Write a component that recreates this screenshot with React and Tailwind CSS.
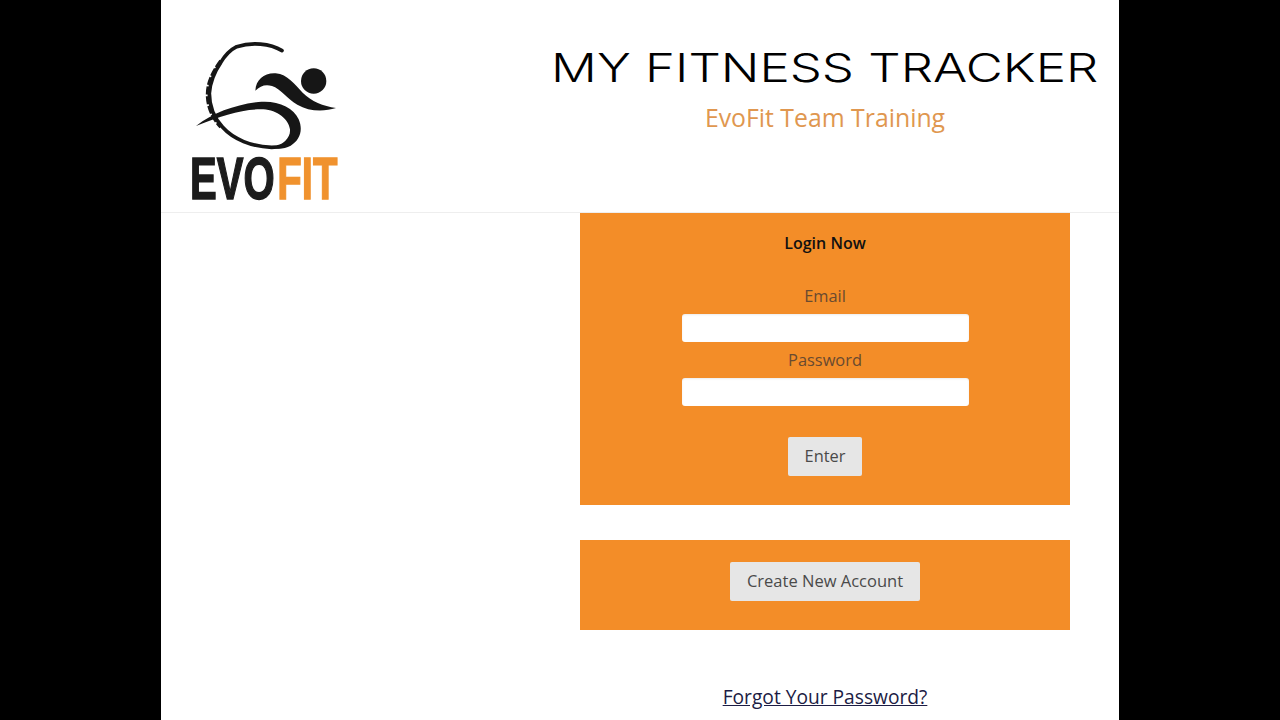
import React from 'react'

const Logo = () => (
  <div className="flex flex-col">
    {/* runner mark, drawn on a 3x grid */}
    <svg width="180" height="127" viewBox="0 0 540 381" className="block">
      <path d="M306 62 C270 40 215 36 170 50 C150 60 135 76 122 98 C100 130 90 160 88 190 C88 225 100 262 128 292 C160 328 215 350 275 352 C295 352 315 347 330 338" fill="none" stroke="#161616" strokeWidth="11" strokeLinecap="round" />
      <path d="M122 92 C98 125 80 160 82 200 C84 235 98 265 122 292" fill="none" stroke="#161616" strokeWidth="9" strokeDasharray="24 5" />
      <path d="M48 288 C100 248 165 224 235 216 C290 210 340 230 356 268 C370 300 360 330 332 347 C316 356 296 358 278 354 C310 342 332 324 330 298 C326 268 292 240 250 238 C190 236 125 256 48 288 Z" fill="#161616" />
      <path d="M226 182 C228 148 253 128 287 130 C324 134 342 162 368 188 C394 214 430 228 468 234 C430 246 386 244 352 224 C320 206 302 176 276 168 C256 162 240 168 226 182 Z" fill="#161616" />
      <circle cx="401" cy="153" r="38" fill="#161616" />
    </svg>
    <div className="ml-[10px] h-[44px] w-[150px] whitespace-nowrap font-['Liberation_Sans',sans-serif] text-[60px] leading-[44px] font-bold [-webkit-text-stroke:1.5px_currentColor]">
      <span className="inline-block origin-left scale-x-[0.668]">
        <span className="text-[#1c1c1c]">EVO</span>
        <span className="ml-[4px] text-[#f0922e]">FIT</span>
      </span>
    </div>
  </div>
)

export default function App() {
  return (
    <div className="flex h-screen justify-center overflow-hidden bg-black font-['Open_Sans',sans-serif]">
      <div className="w-[958px] bg-white">
        {/* Header */}
        <div className="flex h-[213px] border-b border-[#eeeeee] pt-[30px] pl-[19px]">
          <Logo />
          <div className="ml-[220px] flex w-[490px] flex-col items-center pt-[11px]">
            <div className="scale-x-[1.305] font-['Inter',sans-serif] text-[39px] leading-[54px] font-light whitespace-nowrap text-black">
              MY FITNESS TRACKER
            </div>
            <div className="mt-[5px] text-[24.8px] leading-[34px] whitespace-nowrap text-[#e0974f]">
              EvoFit Team Training
            </div>
          </div>
        </div>

        {/* Forms */}
        <div className="ml-[419px] flex w-[490px] flex-col items-center">
          <div className="flex h-[292px] w-full flex-col items-center bg-[#f38d28]">
            <div className="mt-[18px] text-[16px] leading-[24px] font-semibold text-[#111111]">Login Now</div>
            <label className="mt-[28px] text-[16.4px] leading-[26px] text-[#694a30]">Email</label>
            <input type="text" className="mt-[5px] h-[28px] w-[287px] rounded-[3px] bg-white shadow-[inset_0_1px_2px_rgba(0,0,0,0.08)]" />
            <label className="mt-[5px] text-[16.4px] leading-[26px] text-[#694a30]">Password</label>
            <input type="password" className="mt-[5px] h-[28px] w-[287px] rounded-[3px] bg-white shadow-[inset_0_1px_2px_rgba(0,0,0,0.08)]" />
            <button className="mt-[31px] h-[39px] w-[74px] rounded-[2px] bg-[#e6e6e6] text-[16.4px] text-[#4a4a4a]">Enter</button>
          </div>

          <div className="mt-[35px] flex h-[90px] w-full justify-center bg-[#f38d28] pt-[22px]">
            <button className="h-[39px] w-[190px] rounded-[2px] bg-[#e6e6e6] text-[16.5px] text-[#4a4a4a]">Create New Account</button>
          </div>

          <a href="#" className="mt-[53px] text-[19.2px] leading-[28px] font-medium text-[#1c1c44] underline">Forgot Your Password?</a>
        </div>
      </div>
    </div>
  )
}
